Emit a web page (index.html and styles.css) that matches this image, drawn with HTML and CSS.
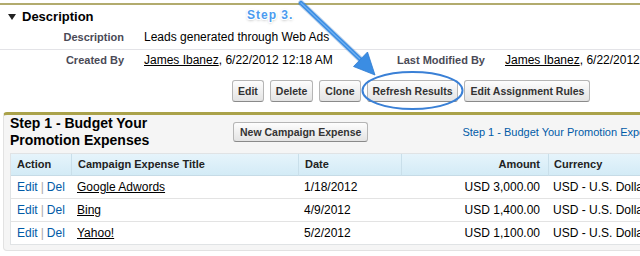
FILE: index.html
```html
<!DOCTYPE html>
<html>
<head>
<meta charset="utf-8">
<link rel="stylesheet" href="styles.css">
</head>
<body>
<div class="page">
  <section class="detail">
    <h2 class="sec-title"><span class="twisty"></span>Description</h2>
    <div class="drow first">
      <span class="lbl">Description</span>
      <span class="val">Leads generated through Web Ads</span>
    </div>
    <div class="drow">
      <span class="lbl">Created By</span>
      <span class="val"><a href="#">James Ibanez</a>, 6/22/2012 12:18 AM</span>
      <span class="lbl">Last Modified By</span>
      <span class="val"><a href="#">James Ibanez</a>, 6/22/2012 12:18 AM</span>
    </div>
    <div class="btns">
      <button class="btn">Edit</button>
      <button class="btn">Delete</button>
      <button class="btn">Clone</button>
      <button class="btn">Refresh Results</button>
      <button class="btn">Edit Assignment Rules</button>
    </div>
  </section>

  <section class="rel">
    <div class="rel-head">
      <h3 class="rel-title">Step 1 - Budget Your Promotion Expenses</h3>
      <div class="rel-btns"><button class="btn">New Campaign Expense</button></div>
      <a class="help" href="#">Step 1 - Budget Your Promotion Expenses Help</a>
    </div>
    <table class="list">
      <colgroup>
        <col class="c-action"><col class="c-title"><col class="c-date"><col class="c-amount"><col class="c-cur">
      </colgroup>
      <thead>
        <tr>
          <th class="first">Action</th>
          <th>Campaign Expense Title</th>
          <th>Date</th>
          <th class="num">Amount</th>
          <th class="cur">Currency</th>
        </tr>
      </thead>
      <tbody>
        <tr>
          <td><a class="act" href="#">Edit</a><span class="sep">|</span><a class="act" href="#">Del</a></td>
          <td><a class="rec" href="#">Google Adwords</a></td>
          <td>1/18/2012</td>
          <td class="num">USD 3,000.00</td>
          <td class="cur">USD - U.S. Dollar</td>
        </tr>
        <tr>
          <td><a class="act" href="#">Edit</a><span class="sep">|</span><a class="act" href="#">Del</a></td>
          <td><a class="rec" href="#">Bing</a></td>
          <td>4/9/2012</td>
          <td class="num">USD 1,400.00</td>
          <td class="cur">USD - U.S. Dollar</td>
        </tr>
        <tr class="last">
          <td><a class="act" href="#">Edit</a><span class="sep">|</span><a class="act" href="#">Del</a></td>
          <td><a class="rec" href="#">Yahoo!</a></td>
          <td>5/2/2012</td>
          <td class="num">USD 1,100.00</td>
          <td class="cur">USD - U.S. Dollar</td>
        </tr>
      </tbody>
    </table>
  </section>

  <svg class="annot" width="640" height="256" viewBox="0 0 640 256">
    <line x1="301" y1="3" x2="361" y2="60" stroke="#2c6fc0" stroke-width="6" stroke-linecap="round" opacity="0.3"/>
    <line x1="301" y1="3" x2="361" y2="60" stroke="#3b8de3" stroke-width="4.2" stroke-linecap="round"/>
    <line x1="301" y1="3" x2="361" y2="60" stroke="#6fb0f2" stroke-width="1.2" stroke-linecap="round"/>
    <polygon points="375,75 353.5,66.5 367.5,52" fill="#3b8de3" stroke="#2f7bd0" stroke-width="0.8" stroke-linejoin="round"/>
    <ellipse cx="412.5" cy="90.5" rx="50" ry="18.5" fill="none" stroke="#3a80d6" stroke-width="2"/>
  </svg>
  <span class="step">Step 3.</span>
</div>
</body>
</html>
```

FILE: styles.css
```css
* { box-sizing: border-box; }
html, body { margin: 0; padding: 0; background: #fff; }
body { font-family: "Liberation Sans", Arial, sans-serif; color: #000; }

.page {
  position: relative;
  width: 640px;
  height: 256px;
  overflow: hidden;
  padding-top: 3px;
}

/* Detail section */
.detail {
  width: 900px;
  border-top: 2px solid #b2ab6e;
}
.sec-title {
  margin: 0;
  padding: 4px 0 2px 8px;
  display: flex;
  align-items: center;
  font-size: 13px;
  line-height: 16px;
  font-weight: bold;
}
.twisty {
  width: 0;
  height: 0;
  border-left: 4px solid transparent;
  border-right: 4px solid transparent;
  border-top: 6px solid #222;
  margin-right: 6px;
}
.drow {
  display: grid;
  grid-template-columns: 124px 209px 112px auto;
  column-gap: 20px;
  padding: 3px 0 4px;
  line-height: 15px;
}
.drow.first { border-bottom: 1px solid #e3e3e7; }
.lbl {
  text-align: right;
  font-size: 11px;
  font-weight: bold;
  color: #4a4a56;
}
.val { font-size: 12px; white-space: nowrap; }
.val a { color: #000; text-decoration: underline; }

.btns {
  display: flex;
  gap: 6px;
  padding: 8px 0 0 232px;
}
.btn {
  height: 22px;
  padding: 0 5px;
  font: bold 10.5px "Liberation Sans", Arial, sans-serif;
  color: #333;
  background: linear-gradient(#fdfdfd, #e3e3e3);
  border: 1px solid #b5b5b5;
  border-bottom-color: #8a8a8a;
  border-radius: 3px;
  white-space: nowrap;
}

/* Related list */
.rel {
  width: 780px;
  margin: 10px 0 0 3px;
  padding: 0 6px 5px;
  background: #f5f5f5;
  border: 1px solid #e2e2e2;
  border-top: 3px solid #aaa24a;
  border-radius: 4px;
}
.rel-head {
  display: flex;
  align-items: center;
}
.rel-title {
  margin: 0;
  width: 190px;
  flex: none;
  font-size: 14px;
  line-height: 17px;
  font-weight: bold;
}
.rel-btns { margin-left: 33px; }
.rel-btns .btn { padding: 0 6px; height: 20px; }
.help {
  margin-left: 94px;
  font-size: 11px;
  color: #015ba7;
  text-decoration: none;
  white-space: nowrap;
}

.list {
  margin-top: 4px;
  width: 737px;
  table-layout: fixed;
  border-collapse: separate;
  border-spacing: 0;
  background: #fff;
  border: 1px solid #e0e3e5;
}
.c-action { width: 60px; }
.c-title { width: 227px; }
.c-date { width: 103px; }
.c-amount { width: 147px; }
.c-cur { width: 198px; }

.list th {
  padding: 3px 6px;
  line-height: 15px;
  font-size: 11px;
  font-weight: bold;
  text-align: left;
  color: #222;
  background: linear-gradient(#e6f4fb, #d3ebf6);
  border-left: 1px solid #c9dfea;
  border-bottom: 1px solid #c6dbe6;
  white-space: nowrap;
}
.list th.first { border-left: 0; }
.list td {
  padding: 4px 6px;
  line-height: 14px;
  font-size: 12px;
  border-bottom: 1px solid #e3e3e3;
  white-space: nowrap;
}
.list tr.last td { border-bottom: 0; }
.list .num { text-align: right; padding-right: 8px; }
.list .cur { padding-left: 5px; }
.act { color: #015ba7; text-decoration: none; }
.sep { color: #aaa; margin: 0 3px; }
.rec { color: #000; text-decoration: underline; }

/* Annotations */
.annot {
  position: absolute;
  left: 0;
  top: 0;
  pointer-events: none;
}
.step {
  position: absolute;
  left: 247px;
  top: 8px;
  font: bold 12px/14px "Liberation Sans", Arial, sans-serif;
  letter-spacing: 1px;
  color: #4b9bef;
  text-shadow:
    1px 0 0 #fff, -1px 0 0 #fff, 0 1px 0 #fff, 0 -1px 0 #fff,
    1px 1px 0 #fff, -1px -1px 0 #fff, 1px -1px 0 #fff, -1px 1px 0 #fff,
    0 1px 3px rgba(0, 0, 0, 0.45);
}
```
